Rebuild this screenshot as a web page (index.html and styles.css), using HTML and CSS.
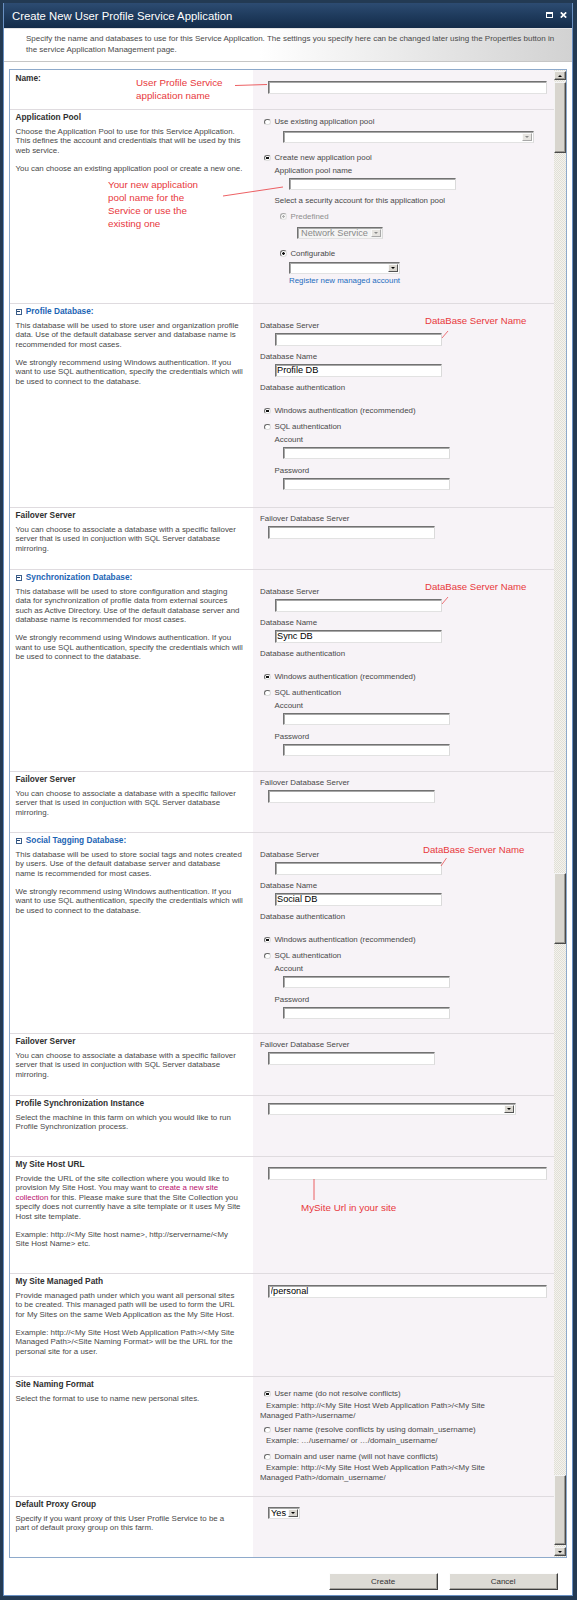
FILE: index.html
```html
<!DOCTYPE html>
<html lang="en">
<head>
<meta charset="utf-8">
<title>Create New User Profile Service Application</title>
<link rel="stylesheet" href="styles.css">
</head>
<body>
<div class="dialog">
  <div class="titlebar">
    <span class="title">Create New User Profile Service Application</span>
    <span class="tb-icons">
      <svg width="7" height="6" viewBox="0 0 7 6"><rect x="0.5" y="0.5" width="6" height="5" fill="none" stroke="#fff"/><rect x="0" y="0" width="7" height="2" fill="#fff"/></svg>
      <svg width="7" height="6" viewBox="0 0 7 6"><path d="M0.8 0.4 L6.2 5.6 M6.2 0.4 L0.8 5.6" stroke="#fff" stroke-width="1.7"/></svg>
    </span>
  </div>
  <div class="desc">Specify the name and databases to use for this Service Application. The settings you specify here can be changed later using the Properties button in<br>the service Application Management page.</div>

  <div class="frame">
    <div class="form">

      <div class="row r-name">
        <div class="lc first"><div class="hd">Name:</div></div>
        <div class="rc pt11"><input class="tb w-wide in8" type="text"></div>
        <span class="note n-name">User Profile Service<br>application name</span>
        <svg class="ov" width="544" height="39"><line x1="225" y1="15.5" x2="257" y2="14.5" stroke="#e8383c" stroke-width="0.8"/></svg>
      </div>

      <div class="row r-pool">
        <div class="lc">
          <div class="hd">Application Pool</div>
          <p class="p">Choose the Application Pool to use for this Service Application.<br>This defines the account and credentials that will be used by this<br>web service.</p>
          <p class="p">You can choose an existing application pool or create a new one.</p>
        </div>
        <div class="rc pt7">
          <div class="opt"><span class="radio"></span>Use existing application pool</div>
          <div class="sel dis w-exist in23 mt4"><span class="v"></span><span class="arr"><i></i></span></div>
          <div class="opt mt10">
            <span class="radio on"></span>Create new application pool</div>
          <div class="lbl in14 mt3">Application pool name</div>
          <input class="tb w-db in29 gi" type="text">
          <div class="lbl in14 mt5">Select a security account for this application pool</div>
          <div class="opt in16 mt6 dim"><span class="radio dis"></span>Predefined</div>
          <div class="sel dis w-ns in37 mt5"><span class="v">Network Service</span><span class="arr"><i></i></span></div>
          <div class="opt in16 mt10"><span class="radio on"></span>Configurable</div>
          <div class="sel w-conf in29 mt3"><span class="v"></span><span class="arr"><i></i></span></div>
          <a class="link in29 gi" href="#">Register new managed account</a>
        </div>
        <span class="note n-pool">Your new application<br>pool name for the<br>Service or use the<br>existing one</span>
        <svg class="ov" width="544" height="193"><line x1="213" y1="86" x2="273" y2="77" stroke="#e8383c" stroke-width="0.8"/></svg>
      </div>

      <div class="row r-prof">
        <div class="lc">
          <div class="hd blue"><span class="tog"></span>Profile Database:</div>
          <p class="p">This database will be used to store user and organization profile<br>data. Use of the default database server and database name is<br>recommended for most cases.</p>
          <p class="p">We strongly recommend using Windows authentication. If you<br>want to use SQL authentication, specify the credentials which will<br>be used to connect to the database.</p>
        </div>
        <div class="rc pt17">
          <div class="lbl">Database Server</div>
          <input class="tb w-db in14 gi" type="text">
          <div class="lbl gl">Database Name</div>
          <input class="tb w-db in14 gi" type="text" value="Profile DB">
          <div class="lbl gl">Database authentication</div>
          <div class="opt mt13"><span class="radio on"></span>Windows authentication (recommended)</div>
          <div class="opt mt6"><span class="radio"></span>SQL authentication</div>
          <div class="lbl in14 mt3">Account</div>
          <input class="tb w-db in22 gi" type="text">
          <div class="lbl in14 gl">Password</div>
          <input class="tb w-db in22 gi" type="password">
        </div>
        <span class="note n-db">DataBase Server Name</span>
        <svg class="ov" width="544" height="203"><line x1="432" y1="34" x2="438" y2="27" stroke="#e8383c" stroke-width="0.7"/></svg>
      </div>

      <div class="row r-fo1">
        <div class="lc">
          <div class="hd">Failover Server</div>
          <p class="p">You can choose to associate a database with a specific failover<br>server that is used in conjuction with SQL Server database<br>mirroring.</p>
        </div>
        <div class="rc pt6">
          <div class="lbl">Failover Database Server</div>
          <input class="tb w-db in8 gi" type="text">
        </div>
      </div>

      <div class="row r-sync">
        <div class="lc">
          <div class="hd blue"><span class="tog"></span>Synchronization Database:</div>
          <p class="p">This database will be used to store configuration and staging<br>data for synchronization of profile data from external sources<br>such as Active Directory. Use of the default database server and<br>database name is recommended for most cases.</p>
          <p class="p">We strongly recommend using Windows authentication. If you<br>want to use SQL authentication, specify the credentials which will<br>be used to connect to the database.</p>
        </div>
        <div class="rc pt17">
          <div class="lbl">Database Server</div>
          <input class="tb w-db in14 gi" type="text">
          <div class="lbl gl">Database Name</div>
          <input class="tb w-db in14 gi" type="text" value="Sync DB">
          <div class="lbl gl">Database authentication</div>
          <div class="opt mt13"><span class="radio on"></span>Windows authentication (recommended)</div>
          <div class="opt mt6"><span class="radio"></span>SQL authentication</div>
          <div class="lbl in14 mt3">Account</div>
          <input class="tb w-db in22 gi" type="text">
          <div class="lbl in14 gl">Password</div>
          <input class="tb w-db in22 gi" type="password">
        </div>
        <span class="note n-db">DataBase Server Name</span>
        <svg class="ov" width="544" height="201"><line x1="432" y1="34" x2="438" y2="27" stroke="#e8383c" stroke-width="0.7"/></svg>
      </div>

      <div class="row r-fo2">
        <div class="lc">
          <div class="hd">Failover Server</div>
          <p class="p">You can choose to associate a database with a specific failover<br>server that is used in conjuction with SQL Server database<br>mirroring.</p>
        </div>
        <div class="rc pt6">
          <div class="lbl">Failover Database Server</div>
          <input class="tb w-db in8 gi" type="text">
        </div>
      </div>

      <div class="row r-soc">
        <div class="lc">
          <div class="hd blue"><span class="tog"></span>Social Tagging Database:</div>
          <p class="p">This database will be used to store social tags and notes created<br>by users. Use of the default database server and database<br>name is recommended for most cases.</p>
          <p class="p">We strongly recommend using Windows authentication. If you<br>want to use SQL authentication, specify the credentials which will<br>be used to connect to the database.</p>
        </div>
        <div class="rc pt17">
          <div class="lbl">Database Server</div>
          <input class="tb w-db in14 gi" type="text">
          <div class="lbl gl">Database Name</div>
          <input class="tb w-db in14 gi" type="text" value="Social DB">
          <div class="lbl gl">Database authentication</div>
          <div class="opt mt13"><span class="radio on"></span>Windows authentication (recommended)</div>
          <div class="opt mt6"><span class="radio"></span>SQL authentication</div>
          <div class="lbl in14 mt3">Account</div>
          <input class="tb w-db in22 gi" type="text">
          <div class="lbl in14 gl">Password</div>
          <input class="tb w-db in22 gi" type="password">
        </div>
        <span class="note n-db soc">DataBase Server Name</span>
        <svg class="ov" width="544" height="200"><line x1="431" y1="33" x2="436.5" y2="25" stroke="#e8383c" stroke-width="0.7"/></svg>
      </div>

      <div class="row r-fo3">
        <div class="lc">
          <div class="hd">Failover Server</div>
          <p class="p">You can choose to associate a database with a specific failover<br>server that is used in conjuction with SQL Server database<br>mirroring.</p>
        </div>
        <div class="rc pt6">
          <div class="lbl">Failover Database Server</div>
          <input class="tb w-db in8 gi" type="text">
        </div>
      </div>

      <div class="row r-psi">
        <div class="lc">
          <div class="hd">Profile Synchronization Instance</div>
          <p class="p">Select the machine in this farm on which you would like to run<br>Profile Synchronization process.</p>
        </div>
        <div class="rc pt7">
          <div class="sel w-psi in8"><span class="v"></span><span class="arr"><i></i></span></div>
        </div>
      </div>

      <div class="row r-host">
        <div class="lc">
          <div class="hd">My Site Host URL</div>
          <p class="p">Provide the URL of the site collection where you would like to<br>provision My Site Host. You may want to <a class="mlink" href="#">create a new site<br>collection</a> for this. Please make sure that the Site Collection you<br>specify does not currently have a site template or it uses My Site<br>Host site template.</p>
          <p class="p">Example: http://&lt;My Site host name&gt;, http://servername/&lt;My<br>Site Host Name&gt; etc.</p>
        </div>
        <div class="rc pt10"><input class="tb w-wide in8" type="text"></div>
        <span class="note n-host">MySite Url in your site</span>
        <svg class="ov" width="544" height="116"><line x1="304" y1="22" x2="304" y2="43" stroke="#e8383c" stroke-width="0.8"/></svg>
      </div>

      <div class="row r-path">
        <div class="lc">
          <div class="hd">My Site Managed Path</div>
          <p class="p">Provide managed path under which you want all personal sites<br>to be created. This managed path will be used to form the URL<br>for My Sites on the same Web Application as the My Site Host.</p>
          <p class="p">Example: http://&lt;My Site Host Web Application Path&gt;/&lt;My Site<br>Managed Path&gt;/&lt;Site Naming Format&gt; will be the URL for the<br>personal site for a user.</p>
        </div>
        <div class="rc pt11"><input class="tb w-wide in8" type="text" value="/personal"></div>
      </div>

      <div class="row r-snf">
        <div class="lc">
          <div class="hd">Site Naming Format</div>
          <p class="p">Select the format to use to name new personal sites.</p>
        </div>
        <div class="rc pt12">
          <div class="opt"><span class="radio on"></span>User name (do not resolve conflicts)</div>
          <div class="ex mt2">Example: http://&lt;My Site Host Web Application Path&gt;/&lt;My Site<br>Managed Path&gt;/username/</div>
          <div class="opt mt5"><span class="radio"></span>User name (resolve conflicts by using domain_username)</div>
          <div class="ex mt1">Example: …/username/ or …/domain_username/</div>
          <div class="opt mt6"><span class="radio"></span>Domain and user name (will not have conflicts)</div>
          <div class="ex mt1">Example: http://&lt;My Site Host Web Application Path&gt;/&lt;My Site<br>Managed Path&gt;/domain_username/</div>
        </div>
      </div>

      <div class="row r-proxy">
        <div class="lc">
          <div class="hd">Default Proxy Group</div>
          <p class="p">Specify if you want proxy of this User Profile Service to be a<br>part of default proxy group on this farm.</p>
        </div>
        <div class="rc pt10">
          <div class="sel w-yes in8"><span class="v">Yes</span><span class="arr"><i></i></span></div>
        </div>
      </div>

    </div>
    <div class="sb">
      <div class="sbtn up"><i></i></div>
      <div class="thumb t1"></div>
      <div class="thumb t2"></div>
      <div class="thumb t3"></div>
      <div class="sbtn down"><i></i></div>
    </div>
  </div>

  <div class="actions">
    <button class="btn" type="button">Create</button>
    <button class="btn" type="button">Cancel</button>
  </div>
</div>
</body>
</html>
```

FILE: styles.css
```css
* { box-sizing: border-box; margin: 0; padding: 0; }
html, body { background: #233a53; }
body {
  width: 577px;
  height: 1600px;
  padding: 3px 4px 4px 3px;
  font-family: "Liberation Sans", Arial, sans-serif;
  color: #484848;
  overflow: hidden;
}

.dialog {
  width: 570px;
  background: #fff;
  border: 1px solid #6990c2;
  border-top: 0;
}

.titlebar {
  height: 25px;
  display: flex;
  align-items: flex-start;
  padding: 0 5px 0 8px;
  background: linear-gradient(#2d4c72 0%, #1f3b5d 50%, #142c49 100%);
  color: #fff;
}
.title { font-size: 11.3px; line-height: 25px; padding-top: 1.2px; white-space: nowrap; }
.tb-icons { margin-left: auto; margin-top: 9px; display: flex; gap: 7px; }
.tb-icons svg { display: block; }

.desc {
  height: 34px;
  padding: 5px 10px 0 22px;
  font-size: 8px;
  line-height: 10.7px;
  color: #4a4a4a;
  white-space: nowrap;
  border-top: 1px solid #e4e4e4;
  border-bottom: 1px solid #c6c6c6;
  background: linear-gradient(90deg, #fff 0%, #fff 45%, #e6e6e6 75%, #d2d2d2 100%);
}

.frame {
  margin: 7px 5px 0 5px;
  border: 1px solid #8eaacb;
  display: flex;
  background: #fff;
}
.form { width: 544px; }

.row {
  position: relative;
  display: grid;
  grid-template-columns: 243px 301px;
  border-top: 1px solid #dfdbdf;
}
.row:first-child { border-top: 0; }
.r-name { height: 39px; }
.r-pool { height: 194px; }
.r-prof { height: 204px; }
.r-fo1 { height: 62px; }
.r-sync { height: 202px; }
.r-fo2 { height: 61px; }
.r-soc { height: 201px; }
.r-fo3 { height: 62px; }
.r-psi { height: 61px; }
.r-host { height: 117px; }
.r-path { height: 103px; }
.r-snf { height: 120px; }
.r-proxy { height: 61px; }

.lc {
  padding: 3px 6px 0 5.5px;
  font-size: 7.9px;
  line-height: 9.4px;
  color: #484848;
  white-space: nowrap;
}
.lc.first { padding-top: 4.3px; }
.hd {
  font-weight: bold;
  font-size: 8.3px;
  line-height: 9.4px;
  color: #303030;
  margin-bottom: 4.6px;
  display: flex;
  align-items: center;
}
.hd.blue { color: #1b64b4; }
.tog {
  width: 6px;
  height: 6px;
  border: 1px solid #3c5e8a;
  background: #fff;
  margin: 0 4.3px 0 0;
  position: relative;
  flex: none;
}
.tog::after {
  content: "";
  position: absolute;
  left: 0.5px; right: 0.5px; top: 1.5px;
  height: 1px;
  background: #22426c;
}
.p + .p { margin-top: 8.6px; }
.mlink { color: #b8106e; text-decoration: none; }

.rc {
  background: #f7f3f7;
  padding-left: 7px;
  font-size: 7.9px;
  line-height: 9.4px;
  color: #484848;
  white-space: nowrap;
}
.pt6 { padding-top: 6.3px; }
.pt7 { padding-top: 7.3px; }
.pt10 { padding-top: 10px; }
.pt11 { padding-top: 11px; }
.pt12 { padding-top: 12.3px; }
.pt17 { padding-top: 17.3px; }

.mt1 { margin-top: 1.6px; }
.mt2 { margin-top: 2.6px; }
.mt3 { margin-top: 3.4px; }
.mt4 { margin-top: 4.3px; }
.mt5 { margin-top: 5.4px; }
.mt6 { margin-top: 6.6px; }
.mt10 { margin-top: 10.4px; }
.mt13 { margin-top: 13.6px; }
.gi { margin-top: 2.3px; }
.gl { margin-top: 6.8px; }

.in8 { margin-left: 8px; }
.in14 { margin-left: 14.5px; }
.in16 { margin-left: 16px; }
.in22 { margin-left: 22.7px; }
.in23 { margin-left: 23px; }
.in29 { margin-left: 29px; }
.in37 { margin-left: 37px; }

.lbl { display: block; }
.link { display: block; color: #1c6cc0; text-decoration: none; }

.opt { display: flex; align-items: center; height: 9.4px; }
.opt.dim { color: #8e8e8e; }
.radio {
  flex: none;
  width: 6.6px;
  height: 6.6px;
  margin: 0 3.8px 0 4px;
  border-radius: 50%;
  border: 1px solid;
  border-color: #6a6a6a #dcdcdc #dcdcdc #6a6a6a;
  background: #fff;
}
.radio.on { background: radial-gradient(circle, #111 0 1.2px, #fff 1.5px); }
.radio.dis {
  border-color: #a8a8a8 #e4e4e4 #e4e4e4 #a8a8a8;
  background: radial-gradient(circle, #b0b0b0 0 1.1px, #f4f4f4 1.4px);
}
.ex { text-indent: 6px; line-height: 9.4px; }

.tb {
  display: block;
  height: 12.5px;
  border: 1px solid;
  border-color: #727272 #dadada #e2e2e2 #727272;
  box-shadow: inset 1px 1px 0 #a8a8a8;
  background: #fff;
  font-family: "Liberation Sans", Arial, sans-serif;
  font-size: 9.2px;
  color: #000;
  padding: 0 1.5px;
  outline: none;
}
.w-wide { width: 278.5px; }
.w-db { width: 167px; }
.w-exist { width: 251px; height: 13.5px; }
.w-ns { width: 86px; }
.w-conf { width: 111px; }
.w-psi { width: 248px; }
.w-yes { width: 32px; height: 11.5px; }

.sel {
  display: flex;
  height: 12px;
  border: 1px solid;
  border-color: #727272 #dadada #e2e2e2 #727272;
  box-shadow: inset 1px 1px 0 #a8a8a8;
  background: #fff;
}
.sel .v {
  flex: 1;
  font-size: 9.2px;
  line-height: 10px;
  padding-left: 2px;
  color: #000;
}
.sel .arr {
  flex: none;
  width: 10px;
  margin: 1px 1px 1px 0;
  background: #d9d6cf;
  border: 1px solid;
  border-color: #fafafa #555 #555 #fafafa;
  display: flex;
  align-items: center;
  justify-content: center;
}
.sel .arr i {
  width: 0; height: 0;
  border-left: 2.2px solid transparent;
  border-right: 2.2px solid transparent;
  border-top: 2.2px solid #000;
}
.sel.dis .v { color: #8a8a8a; padding-left: 3px; }
.sel.dis .arr { background: #e6e4e0; border-color: #fafafa #a8a8a8 #a8a8a8 #fafafa; }
.sel.dis .arr i { border-top-color: #8a8a8a; }
.w-ns { background: #f4f4f4; }

.note {
  position: absolute;
  color: #e8383c;
  font-size: 9.8px;
  line-height: 13px;
  white-space: nowrap;
}
.n-name { left: 126px; top: 5.5px; }
.n-pool { left: 98px; top: 67.5px; }
.n-db { left: 415px; top: 9.5px; font-size: 9.6px; }
.n-db.soc { left: 413px; }
.n-host { left: 291px; top: 43.5px; }
.ov { position: absolute; left: 0; top: 0; pointer-events: none; }

.sb {
  width: 12px;
  display: flex;
  flex-direction: column;
  background: repeating-conic-gradient(#f4f3ee 0% 25%, #e1dfd7 0% 50%) 0 0 / 2px 2px;
}
.sbtn, .thumb {
  flex: none;
  background: #d8d5ce;
  border: 1px solid;
  border-color: #f4f4f4 #4a4a4a #4a4a4a #f4f4f4;
  box-shadow: inset -1px -1px 0 #9a9892;
}
.sbtn { height: 9px; display: flex; align-items: center; justify-content: center; }
.sbtn i {
  width: 0; height: 0;
  border-left: 2.5px solid transparent;
  border-right: 2.5px solid transparent;
}
.up { margin-top: 1px; }
.up i { border-bottom: 2.5px solid #000; }
.down { margin-top: 2px; }
.down i { border-top: 2.5px solid #000; }
.t1 { margin-top: 2px; height: 71px; }
.t2 { margin-top: 720px; height: 71px; }
.t3 { margin-top: 531px; height: 70px; }

.actions {
  height: 37px;
  display: flex;
  justify-content: flex-end;
  gap: 11px;
  padding: 15px 14.4px 0 0;
}
.btn {
  width: 109px;
  height: 17px;
  background: #dddbd5;
  border: 1px solid;
  border-color: #fdfdfd #3e3e3e #3e3e3e #fdfdfd;
  box-shadow: inset -1px -1px 0 #a3a19b;
  font-family: "Liberation Sans", Arial, sans-serif;
  font-size: 8px;
  color: #333;
}
```
